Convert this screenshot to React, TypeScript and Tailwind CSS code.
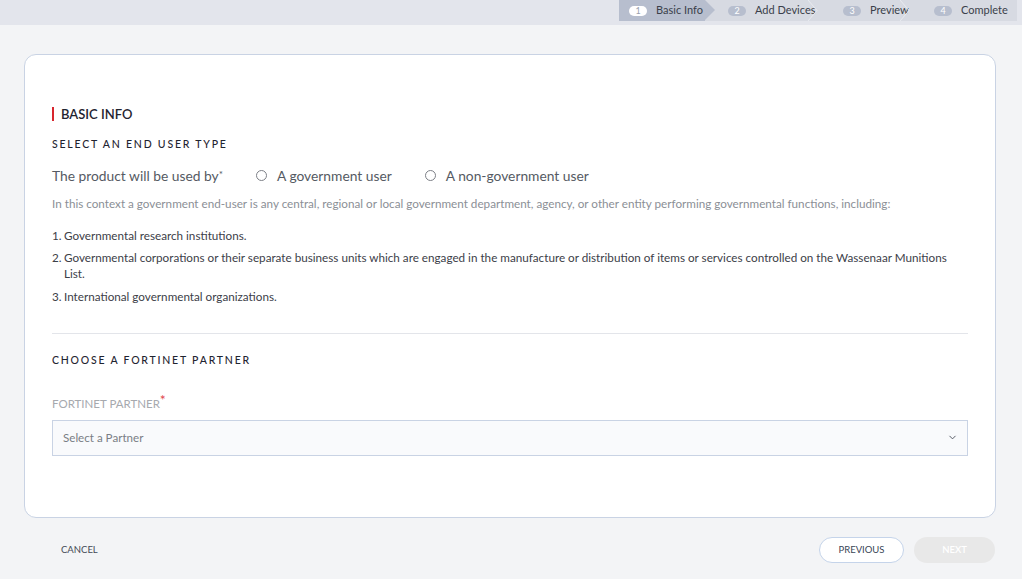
import { ChevronDown } from 'lucide-react';

const STEPS = [
  { label: 'Basic Info', cls: 'w-[86px] pl-[10px]' },
  { label: 'Add Devices', cls: 'w-[113px] pl-[23px]' },
  { label: 'Preview', cls: 'w-[92px] pl-[25px]' },
  { label: 'Complete', cls: 'w-[107px] pl-[24px]' },
];

function Stepper() {
  return (
    <div className="flex h-[21px] bg-[#d7dae2]">
      {STEPS.map((s, i) => {
        const active = i === 0;
        return (
          <div
            key={s.label}
            className={`relative flex items-center gap-[9px] text-[11px] text-[#3a3f4a] ${s.cls} ${active ? 'bg-[#b7bece]' : ''}`}
          >
            <span
              className={`flex h-[10px] w-[18px] items-center justify-center rounded-full text-[9px] leading-none ${active ? 'bg-white text-[#9aa0ad]' : 'bg-[#b7bece] text-white'}`}
            >
              {i + 1}
            </span>
            <span>{s.label}</span>
            {active ? (
              <span className="absolute right-[-10px] top-0 z-10 h-0 w-0 border-y-[10.5px] border-l-[10px] border-y-transparent border-l-[#b7bece]" />
            ) : i === 1 || i === 2 ? (
              <svg className="absolute right-0 top-0 z-10" width="10" height="21" viewBox="0 0 10 21">
                <path d="M0 0 L9 10.5 L0 21" fill="none" stroke="#e8eaef" strokeWidth="1" />
              </svg>
            ) : null}
          </div>
        );
      })}
    </div>
  );
}

function Radio({ label }: { label: string }) {
  return (
    <label className="flex items-center gap-[10px]">
      <span className="h-[11px] w-[11px] rounded-full border border-[#7d8087]" />
      <span>{label}</span>
    </label>
  );
}

export default function App() {
  return (
    <div className="flex h-[579px] w-[1022px] flex-col bg-[#f3f4f6] font-['Lato','Open_Sans',sans-serif]">
      <div className="flex h-[25px] justify-end bg-[#e3e5ec] pr-[5px]">
        <Stepper />
      </div>

      <div className="pl-[24px] pr-[26px] pt-[29px]">
        <div className="h-[464px] rounded-[12px] border border-[#c9d3e4] bg-white px-[27px] pt-[52px]">
          <div className="flex items-center gap-[7px] text-[13px] font-semibold leading-none text-[#1f2430]">
            <span className="h-[14px] w-[2px] bg-[#d8262e]" />
            BASIC INFO
          </div>

          <div className="mt-[18px] text-[10.5px] font-medium leading-none tracking-[0.17em] text-[#1f2430]">
            SELECT AN END USER TYPE
          </div>

          <div className="mt-[19px] flex items-center text-[13.8px] leading-none text-[#555a63]">
            <span className="w-[204px]">
              The product will be used by<span className="align-top text-[10px]">*</span>
            </span>
            <div className="flex items-center gap-[33px]">
              <Radio label="A government user" />
              <Radio label="A non-government user" />
            </div>
          </div>

          <p className="mt-[14px] text-[11.7px] leading-[14px] text-[#8b8f96]">
            In this context a government end-user is any central, regional or local government department, agency, or other entity performing governmental functions, including:
          </p>

          <ol className="mt-[17px] flex flex-col gap-[6px] text-[11.7px] leading-[16px] text-[#3c4048]">
            <li className="flex"><span className="w-[12px] shrink-0">1.</span><span>Governmental research institutions.</span></li>
            <li className="flex">
              <span className="w-[12px] shrink-0">2.</span>
              <span>Governmental corporations or their separate business units which are engaged in the manufacture or distribution of items or services controlled on the Wassenaar Munitions List.</span>
            </li>
            <li className="mt-[1px] flex"><span className="w-[12px] shrink-0">3.</span><span>International governmental organizations.</span></li>
          </ol>

          <div className="mt-[29px] h-px bg-[#e3e5ea]" />

          <div className="mt-[21px] text-[10.5px] font-medium leading-none tracking-[0.17em] text-[#1f2430]">
            CHOOSE A FORTINET PARTNER
          </div>

          <div className="mt-[30px] text-[11.5px] leading-none text-[#a6a9ae]">
            FORTINET PARTNER<span className="relative top-[-3px] text-[14px] text-[#e0484f]">*</span>
          </div>

          <div className="mt-[10px] flex h-[36px] items-center justify-between border border-[#c9d3e4] bg-[#f9fafc] pl-[10px] pr-[9px] text-[11.6px] text-[#7a7e85]">
            <span>Select a Partner</span>
            <ChevronDown className="h-[11px] w-[11px] text-[#4a4f5a]" strokeWidth={2} />
          </div>
        </div>
      </div>

      <div className="flex items-center justify-between pl-[27px] pr-[27px] pt-[19px]">
        <button className="pl-[34px] text-[9.5px] text-[#444a55]">CANCEL</button>
        <div className="flex items-center gap-[10px]">
          <button className="h-[26px] w-[85px] rounded-full border border-[#c5d4ea] bg-white text-[9.5px] text-[#3a4556]">
            PREVIOUS
          </button>
          <button className="h-[26px] w-[81px] rounded-full bg-[#e8e8e8] text-[9.5px] font-semibold text-white">
            NEXT
          </button>
        </div>
      </div>
    </div>
  );
}
